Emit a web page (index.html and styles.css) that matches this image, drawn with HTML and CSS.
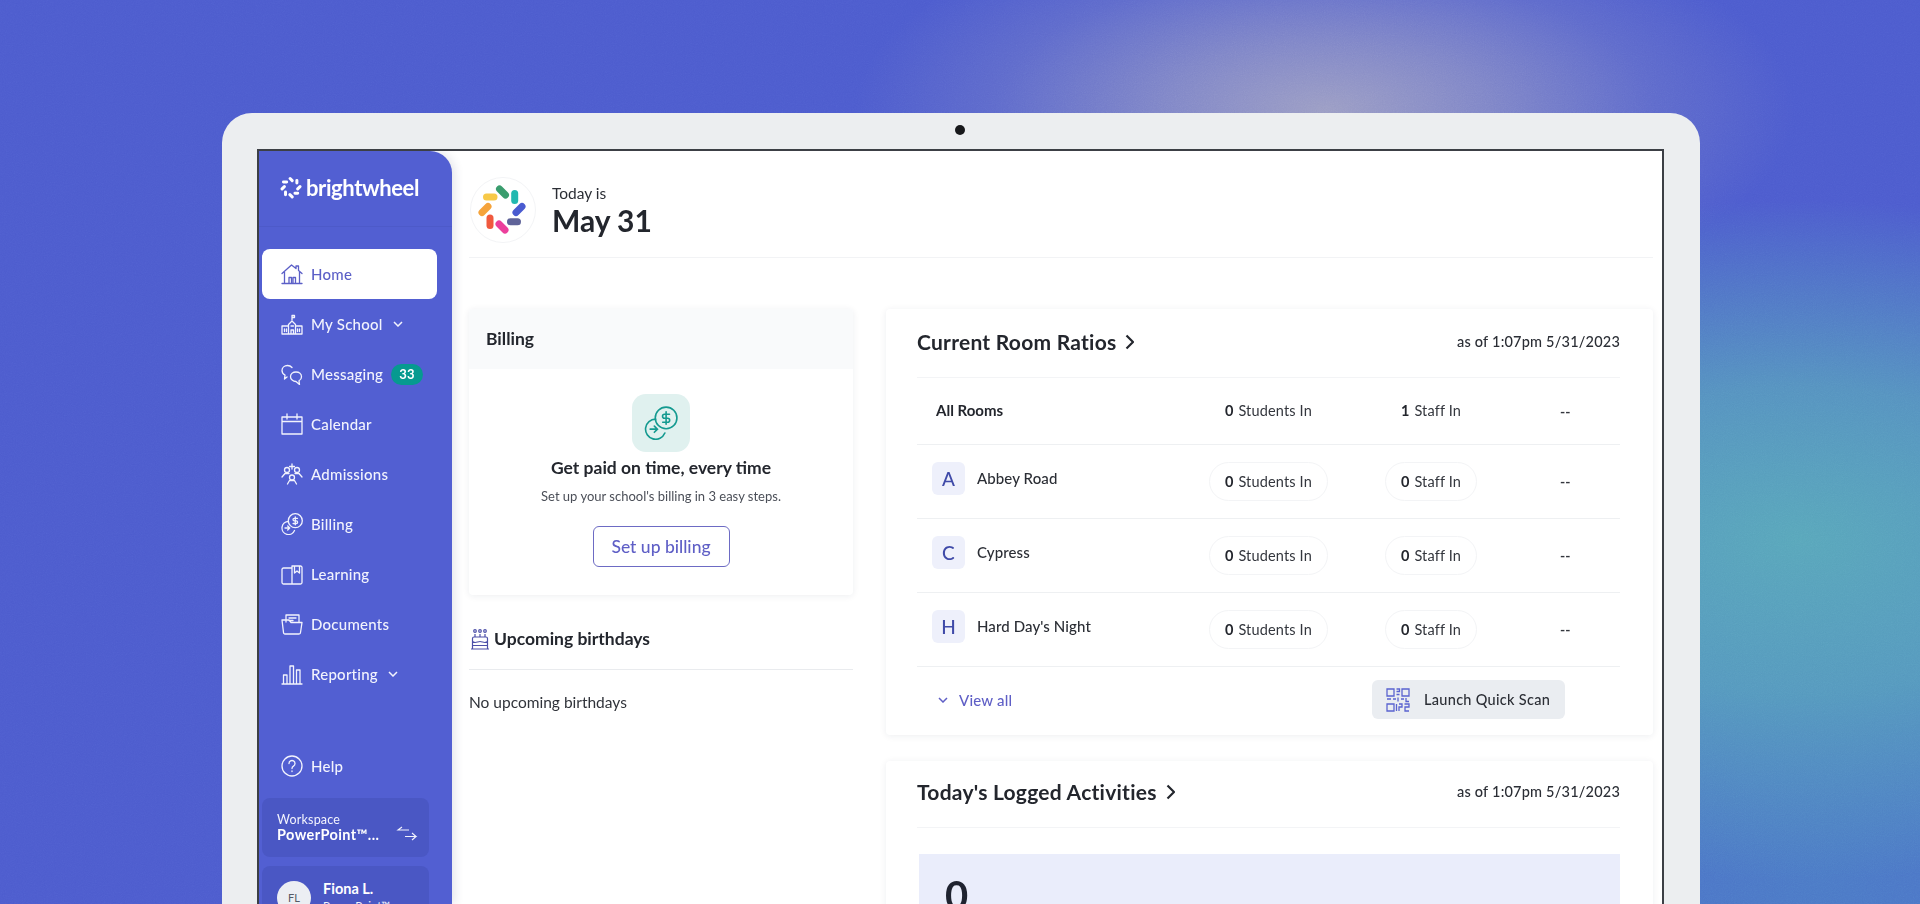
FILE: index.html
```html
<!DOCTYPE html>
<html lang="en">
<head>
<meta charset="utf-8">
<title>brightwheel</title>
<link rel="stylesheet" href="styles.css">
</head>
<body>
<div class="stage">
  <svg class="grain" width="1920" height="904" aria-hidden="true"><filter id="n"><feTurbulence type="fractalNoise" baseFrequency="0.9" numOctaves="2"/><feColorMatrix type="saturate" values="0"/></filter><rect width="1920" height="904" filter="url(#n)"/></svg>
  <div class="laptop">
    <span class="camera"></span>
    <div class="screen">
      <aside class="sidebar">
        <div class="brand">
          <svg class="brand-mark" viewBox="13 15 50 50" fill="none" stroke="#fff" stroke-width="6.500" stroke-linecap="round"><path d="M20.500 28h7M35 20.500l4.500 4.500M49.700 24.500v5.500M51.500 43l5-5M45.500 52.700h6M34.500 55.500l5 5M25 50v6M17.500 43l5-5"/></svg>
          <span class="brand-name">brightwheel</span>
        </div>
        <nav class="nav">
          <a class="nav-item active"><svg class="ico" viewBox="0 0 22 22"><path d="M1 10.500 10.500 2 15 5.500V3h2.500v4.500L21 10.500M3.500 9v11M18.500 9v11M1 20.500h20M8 20v-5.500h2.500V20M12 20v-5.500h2.500V20"/></svg>Home</a>
          <a class="nav-item"><svg class="ico" viewBox="0 0 22 22"><path d="M11 7V2.500h2.500v2H11M7.500 21v-9.500L11 8l3.500 3.500V21M7.500 13h-6.500v8h20v-8h-6.500M3.500 16v2.500M5.500 16v2.500M16.500 16v2.500M18.500 16v2.500M10 21v-4h2.500v4M10 13h2.500"/></svg>My School<svg class="caret" viewBox="0 0 10 6"><path d="M1 1l4 4 4-4"/></svg></a>
          <a class="nav-item"><svg class="ico" viewBox="0 0 22 22"><path d="M6 14 3.500 16l.5-4C2 11 1 9.500 1 7.500 1 4.500 3.500 2.500 6.500 2.500c2 0 3.500.8 4.500 2M15 9c3 0 5.500 2 5.500 4.700 0 1.800-1 3.300-2.500 4.100l.5 3.700-3.500-3c-3 0-5.500-2.100-5.500-4.800S12 9 15 9z"/></svg>Messaging<span class="badge">33</span></a>
          <a class="nav-item"><svg class="ico" viewBox="0 0 22 22"><path d="M1 4h20v17H1zM1 8.500h20M6 1v5M16 1v5"/></svg>Calendar</a>
          <a class="nav-item"><svg class="ico" viewBox="0 0 22 22"><circle cx="6" cy="7" r="2.500"/><circle cx="16" cy="7" r="2.500"/><circle cx="11" cy="14.500" r="2.500"/><path d="M1 14l3-3.500h4M21 14l-3-3.500h-4M6.500 21l2-3.500h5l2 3.500M11 1v5M8.500 3.500h5"/></svg>Admissions</a>
          <a class="nav-item"><svg class="ico" viewBox="0 0 22 22"><circle cx="14.300" cy="7.700" r="7"/><path d="M7.500 8.500A6.500 6.500 0 1 0 13.500 17.500M16.500 5.300h-3.200a1.300 1.300 0 0 0 0 2.600h2a1.300 1.300 0 0 1 0 2.600h-3.200M14.300 3.800v8M4 15h4.500M6.700 13l2 2-2 2"/></svg>Billing</a>
          <a class="nav-item"><svg class="ico" viewBox="0 0 22 22"><path d="M11 5H2.500A1.500 1.500 0 0 0 1 6.500v13A1.500 1.500 0 0 0 2.500 21H11zM11 21h8.500a1.500 1.500 0 0 0 1.500-1.500v-15A1.500 1.500 0 0 0 19.500 3H11zM13.500 3v7l2.500-2 2.500 2V3"/></svg>Learning</a>
          <a class="nav-item"><svg class="ico" viewBox="0 0 22 22"><path d="M5 9V2h13v7M8 5h7M8 7.500h4M1 7h7l2 2.500h11l-1.500 10a1.500 1.500 0 0 1-1.500 1.500H4a1.500 1.500 0 0 1-1.500-1.500z"/></svg>Documents</a>
          <a class="nav-item"><svg class="ico" viewBox="0 0 22 22"><path d="M1 21h20M2.500 21v-9h3.500v9M9 21V3h3.500v18M15.500 21V7H19v14"/></svg>Reporting<svg class="caret" viewBox="0 0 10 6"><path d="M1 1l4 4 4-4"/></svg></a>
          <a class="nav-item help"><svg class="ico" viewBox="0 0 22 22"><circle cx="11" cy="11" r="10"/><path d="M8 8.500a3 3 0 1 1 4.500 2.600c-1 .6-1.500 1.200-1.500 2.400M11 16v.5"/></svg>Help</a>
        </nav>
        <div class="workspace">
          <div class="ws-text"><span class="ws-label">Workspace</span><span class="ws-name">PowerPoint™...</span></div>
          <svg class="swap" viewBox="0 0 20 12"><path d="M5 1 1 4h11M15 7l4 3.500H8M19 10.500 15 14"/></svg>
        </div>
        <div class="user">
          <span class="avatar">FL</span>
          <div class="user-text"><span class="user-name">Fiona L.</span><span class="user-org">PowerPoint™</span></div>
        </div>
      </aside>
      <main class="main">
        <header class="today">
          <svg class="sprinkles" viewBox="5 8 66 66" stroke-width="7" stroke-linecap="round" fill="none">
            <circle class="ring" cx="38" cy="41" r="32.500"/>
            <path stroke="#f7c948" d="M21.500 28h7.500"/><path stroke="#3a9d6e" d="M34.500 20l6 6"/><path stroke="#22b8b0" d="M49.700 24.500v7"/><path stroke="#4a5bd0" d="M51 43.500l6-6"/><path stroke="#5f6399" d="M45.500 52.700h7"/><path stroke="#ec3f9c" d="M34 55l6 6"/><path stroke="#f0593e" d="M25 49v7.500"/><path stroke="#f5a33b" d="M17 43.500l6-6"/>
          </svg>
          <div class="today-text"><span class="today-label">Today is</span><span class="today-date">May 31</span></div>
        </header>
        <div class="columns">
          <div class="left">
            <section class="card billing">
              <h2 class="billing-head">Billing</h2>
              <div class="billing-body">
                <span class="coin-tile"><svg class="coin" viewBox="0 0 22 22"><circle cx="14.300" cy="7.700" r="7"/><path d="M7.500 8.500A6.500 6.500 0 1 0 13.500 17.500M16.500 5.300h-3.200a1.300 1.300 0 0 0 0 2.600h2a1.300 1.300 0 0 1 0 2.600h-3.200M14.300 3.800v8M4 15h4.500M6.700 13l2 2-2 2"/></svg></span>
                <h3 class="billing-title">Get paid on time, every time</h3>
                <p class="billing-sub">Set up your school's billing in 3 easy steps.</p>
                <button class="btn-outline">Set up billing</button>
              </div>
            </section>
            <h2 class="bday-head"><svg class="cake" viewBox="0 0 20 22"><path d="M1 21h18M2.500 21V10.500a1.500 1.500 0 0 1 1.500-1.500h12a1.500 1.500 0 0 1 1.500 1.500V21M2.500 13.500c2.500 2.500 5 0 7.500 0s5 2.500 7.500 0M2.500 17.500h15M5 6V9M10 6V9M15 6V9"/><circle cx="5" cy="3" r="1.300"/><circle cx="10" cy="3" r="1.300"/><circle cx="15" cy="3" r="1.300"/></svg>Upcoming birthdays</h2>
            <p class="bday-empty">No upcoming birthdays</p>
          </div>
          <div class="right">
            <section class="card ratios">
              <header class="card-head">
                <h2 class="card-title">Current Room Ratios<svg class="chev" viewBox="0 0 9 16"><path d="M1.500 1.500 8 8l-6.500 6.500"/></svg></h2>
                <span class="asof">as of 1:07pm 5/31/2023</span>
              </header>
              <div class="row row-all">
                <span class="all-name">All Rooms</span>
                <span class="stat plain"><b>0</b> Students In</span>
                <span class="stat plain"><b>1</b> Staff In</span>
                <span class="dash">--</span>
              </div>
              <div class="row">
                <span class="room"><span class="tile">A</span>Abbey Road</span>
                <span class="stat"><b>0</b> Students In</span>
                <span class="stat"><b>0</b> Staff In</span>
                <span class="dash">--</span>
              </div>
              <div class="row">
                <span class="room"><span class="tile">C</span>Cypress</span>
                <span class="stat"><b>0</b> Students In</span>
                <span class="stat"><b>0</b> Staff In</span>
                <span class="dash">--</span>
              </div>
              <div class="row">
                <span class="room"><span class="tile">H</span>Hard Day's Night</span>
                <span class="stat"><b>0</b> Students In</span>
                <span class="stat"><b>0</b> Staff In</span>
                <span class="dash">--</span>
              </div>
              <footer class="card-foot">
                <a class="view-all"><svg class="caret-blue" viewBox="0 0 10 6"><path d="M1 1l4 4 4-4"/></svg>View all</a>
                <button class="scan"><svg class="qr" viewBox="0 0 24 24"><path d="M1 1h7v7H1zM16 1h7v7h-7zM1 16h7v7H1zM10.500 1h3v2.500h-3M10.500 6.500h3M1 11h4M7 11h3M12 9.500v4M15 11h3M20 10v3.500h3M10.500 16v7M13 16h3v3h-3v4M18.500 16h4.500v3h-4v4h4"/></svg>Launch Quick Scan</button>
              </footer>
            </section>
            <section class="card logged">
              <header class="card-head">
                <h2 class="card-title">Today's Logged Activities<svg class="chev" viewBox="0 0 9 16"><path d="M1.500 1.500 8 8l-6.500 6.500"/></svg></h2>
                <span class="asof">as of 1:07pm 5/31/2023</span>
              </header>
              <div class="metric"><span class="metric-num">0</span></div>
            </section>
          </div>
        </div>
      </main>
    </div>
  </div>
</div>
</body>
</html>
```

FILE: styles.css
```css
* { box-sizing: border-box; }
html, body { margin: 0; padding: 0; height: 904px; overflow: hidden; }
body { font-family: "Lato", "Liberation Sans", sans-serif; color: #23262d; }

.stage {
  position: relative;
  width: 1920px;
  height: 904px;
  overflow: hidden;
  padding: 113px 220px 0 222px;
  background:
    radial-gradient(ellipse 470px 200px at 1325px 110px, rgba(178,176,194,.78) 0, rgba(178,176,194,.5) 35%, rgba(178,176,194,.18) 70%, rgba(178,176,194,0) 100%),
    radial-gradient(ellipse 620px 340px at 1800px 540px, rgba(90,170,186,.95) 0, rgba(90,170,186,.7) 45%, rgba(90,170,186,0) 100%),
    radial-gradient(ellipse 620px 480px at 1820px 880px, rgba(76,124,198,.95) 0, rgba(76,124,198,.6) 55%, rgba(76,124,198,0) 100%),
    #4d5cce;
}
.grain { position: absolute; left: 0; top: 0; opacity: .12; mix-blend-mode: overlay; }

.laptop {
  position: relative;
  height: 791px;
  padding: 36px 36px 0 35px;
  background: #eceef0;
  border-radius: 30px 30px 0 0;
}
.camera {
  position: absolute;
  left: 733px;
  top: 12px;
  width: 10px;
  height: 10px;
  border-radius: 50%;
  background: #17181b;
}
.screen {
  display: flex;
  height: 100%;
  overflow: hidden;
  background: #fff;
  border: 2px solid #3c3f45;
  border-bottom: 0;
}

/* sidebar */
.sidebar {
  flex: 0 0 193px;
  display: flex;
  flex-direction: column;
  background: #525fd2;
  border-radius: 0 22px 0 0;
  box-shadow: 3px 0 10px rgba(30,40,80,.12);
  color: #f2f3fd;
  position: relative;
  z-index: 1;
}
.sidebar > * { flex: none; }
.brand {
  display: flex;
  align-items: center;
  gap: 3px;
  height: 76px;
  padding: 0 0 2px 21px;
  border-bottom: 1px solid #4d5ac9;
}
.brand-mark { width: 23px; height: 23px; flex: none; }
.brand-name { font-size: 22px; font-weight: 700; color: #fff; letter-spacing: -.4px; }
.nav { display: flex; flex-direction: column; padding: 22px 0 0 3px; }
.nav-item {
  display: flex;
  align-items: center;
  width: 175px;
  height: 50px;
  padding-left: 19px;
  font-size: 15px;
  font-weight: 500;
  letter-spacing: .25px;
  border-radius: 8px;
}
.nav-item.active { background: #fff; color: #5b5fc7; }
.ico { width: 22px; height: 22px; margin-right: 8px; fill: none; stroke: currentColor; stroke-width: 1.300; stroke-linejoin: round; stroke-linecap: round; flex: none; }
.caret { width: 10px; height: 6px; margin-left: 10px; fill: none; stroke: currentColor; stroke-width: 1.500; }
.badge {
  margin-left: 8px;
  padding: 0 8px;
  height: 21px;
  line-height: 21px;
  border-radius: 11px;
  background: #069a90;
  color: #fff;
  font-size: 13px;
  font-weight: 700;
}
.help { margin-top: 42px; }
.workspace {
  display: flex;
  align-items: center;
  width: 167px;
  height: 59px;
  margin: 7px 0 0 3px;
  padding: 0 12px 0 15px;
  border-radius: 8px;
  background: #4a57c4;
}
.ws-text { display: flex; flex-direction: column; flex: 1; }
.ws-label { font-size: 12.500px; line-height: 15px; letter-spacing: .2px; }
.ws-name { font-size: 14.500px; line-height: 16px; font-weight: 700; letter-spacing: .4px; color: #fff; white-space: nowrap; }
.swap { width: 20px; height: 14px; overflow: visible; fill: none; stroke: currentColor; stroke-width: 1.100; margin-top: 9px; flex: none; }
.user {
  display: flex;
  align-items: flex-start;
  width: 167px;
  height: 90px;
  margin: 9px 0 0 3px;
  padding: 15px 12px 0 15px;
  border-radius: 8px;
  background: #4a57c4;
}
.avatar {
  width: 34px;
  height: 34px;
  flex: none;
  border-radius: 50%;
  background: #eceef3;
  color: #555a66;
  font-size: 11px;
  line-height: 34px;
  text-align: center;
}
.user-text { display: flex; flex-direction: column; margin: -1px 0 0 12px; }
.user-name { font-size: 14.500px; line-height: 18px; font-weight: 700; color: #fff; }
.user-org { font-size: 11.500px; line-height: 15px; }

/* main */
.main { flex: 1; min-width: 0; padding: 0 8px 0 17px; }
.today {
  display: flex;
  align-items: center;
  gap: 16px;
  height: 107px;
  padding: 26px 0 14px 1px;
  margin-right: 1px;
  border-bottom: 1px solid #f2f3f5;
}
.sprinkles { width: 66px; height: 66px; flex: none; }
.ring { stroke: #f3f4f6; stroke-width: 1; fill: #fff; }
.today-text { display: flex; flex-direction: column; padding-top: 3px; }
.today-label { font-size: 15.500px; line-height: 17px; color: #2b2e35; }
.today-date { font-size: 30px; line-height: 37px; font-weight: 700; color: #23262d; }

.columns { display: grid; grid-template-columns: 384px 767px; column-gap: 33px; margin-top: 51px; }

.card { background: #fff; border-radius: 4px; box-shadow: 0 1px 7px rgba(30,40,70,.08); }

/* billing */
.billing { height: 286px; overflow: hidden; }
.billing-head { margin: 0; height: 60px; padding: 0 0 0 17px; background: #f9fafb; font-size: 17.500px; font-weight: 700; line-height: 60px; }
.billing-body { display: flex; flex-direction: column; align-items: center; padding-top: 25px; }
.coin-tile { display: flex; align-items: center; justify-content: center; width: 58px; height: 58px; border-radius: 14px; background: #e0f1ef; }
.coin { width: 34px; height: 34px; fill: none; stroke: #149a90; stroke-width: 1.050; stroke-linecap: round; }
.billing-title { margin: 4px 0 0; font-size: 17.500px; line-height: 24px; font-weight: 700; }
.billing-sub { margin: 9px 0 0; font-size: 13px; line-height: 15px; color: #4b4f58; }
.btn-outline {
  width: 137px;
  height: 41px;
  margin-top: 22px;
  background: #fff;
  border: 1.500px solid #6d6bc4;
  border-radius: 6px;
  color: #5f5fc6;
  font: 500 17.500px "Lato", "Liberation Sans", sans-serif;
}
.bday-head {
  display: flex;
  align-items: center;
  gap: 4px;
  height: 45px;
  margin: 30px 0 0;
  padding: 0 0 17px 1px;
  border-bottom: 1px solid #e9ebee;
  font-size: 17.500px;
  font-weight: 700;
}
.cake { width: 20px; height: 22px; fill: none; stroke: #4c4fa8; stroke-width: 1.200; flex: none; }
.bday-empty { margin: 23px 0 0; font-size: 15.500px; line-height: 18px; color: #30333a; }

/* ratios */
.ratios { height: 426px; padding: 0 33px 0 31px; }
.card-head {
  display: flex;
  align-items: center;
  justify-content: space-between;
  height: 69px;
  padding-bottom: 3px;
  border-bottom: 1px solid #f3f4f6;
}
.card-title { display: flex; align-items: center; margin: 0; font-size: 21px; font-weight: 700; color: #23262d; letter-spacing: .25px; }
.chev { width: 9px; height: 16px; margin-left: 9px; fill: none; stroke: #23262d; stroke-width: 2.200; }
.asof { font-size: 14.500px; font-weight: 500; color: #2b2e35; letter-spacing: .2px; }
.row {
  display: grid;
  grid-template-columns: 277px 176px 175px auto;
  align-items: center;
  height: 74px;
  padding-left: 15px;
  border-bottom: 1px solid #eef0f2;
}
.row-all { height: 67px; }
.all-name { padding: 0 0 2px 4px; font-size: 15px; font-weight: 700; }
.room { display: flex; align-items: center; gap: 12px; margin-bottom: 7px; font-size: 15px; font-weight: 500; letter-spacing: .1px; color: #2b2e35; }
.tile { display: flex; align-items: center; justify-content: center; width: 33px; height: 33px; border-radius: 6px; background: #eef0fb; color: #3f4aa8; font-size: 19px; }
.stat {
  justify-self: start;
  height: 39px;
  padding: 0 15px;
  border: 1px solid #f3f4f6;
  border-radius: 20px;
  font-size: 14.500px;
  line-height: 37px;
  letter-spacing: .15px;
  color: #33363d;
}
.stat b { margin-right: 1px; color: #23262d; }
.stat.plain { border-color: transparent; line-height: 36px; }
.dash { font-size: 14px; font-weight: 700; color: #33363d; }
.card-foot { display: flex; justify-content: space-between; align-items: flex-start; padding: 13px 55px 0 21px; }
.view-all { display: flex; align-items: center; gap: 11px; height: 40px; color: #5f5fc6; font-size: 15px; font-weight: 500; letter-spacing: .2px; }
.caret-blue { width: 10px; height: 6px; fill: none; stroke: currentColor; stroke-width: 1.500; }
.scan {
  display: flex;
  align-items: center;
  gap: 14px;
  width: 193px;
  height: 39px;
  padding: 0 0 0 14px;
  border: 0;
  border-radius: 6px;
  background: #eaedf1;
  color: #2b2e35;
  font: 500 14.500px "Lato", "Liberation Sans", sans-serif;
  letter-spacing: .3px;
}
.qr { width: 24px; height: 24px; fill: none; stroke: #5a63d0; stroke-width: 1.300; flex: none; }

/* logged */
.logged { margin-top: 26px; height: 300px; padding: 0 33px 0 31px; }
.logged .card-head { height: 67px; padding-bottom: 5px; }
.metric { margin: 26px 0 0 2px; height: 200px; padding: 18px 26px; background: #eaedfb; }
.metric-num { font-size: 40px; line-height: 46px; font-weight: 700; color: #1f2330; }
```
